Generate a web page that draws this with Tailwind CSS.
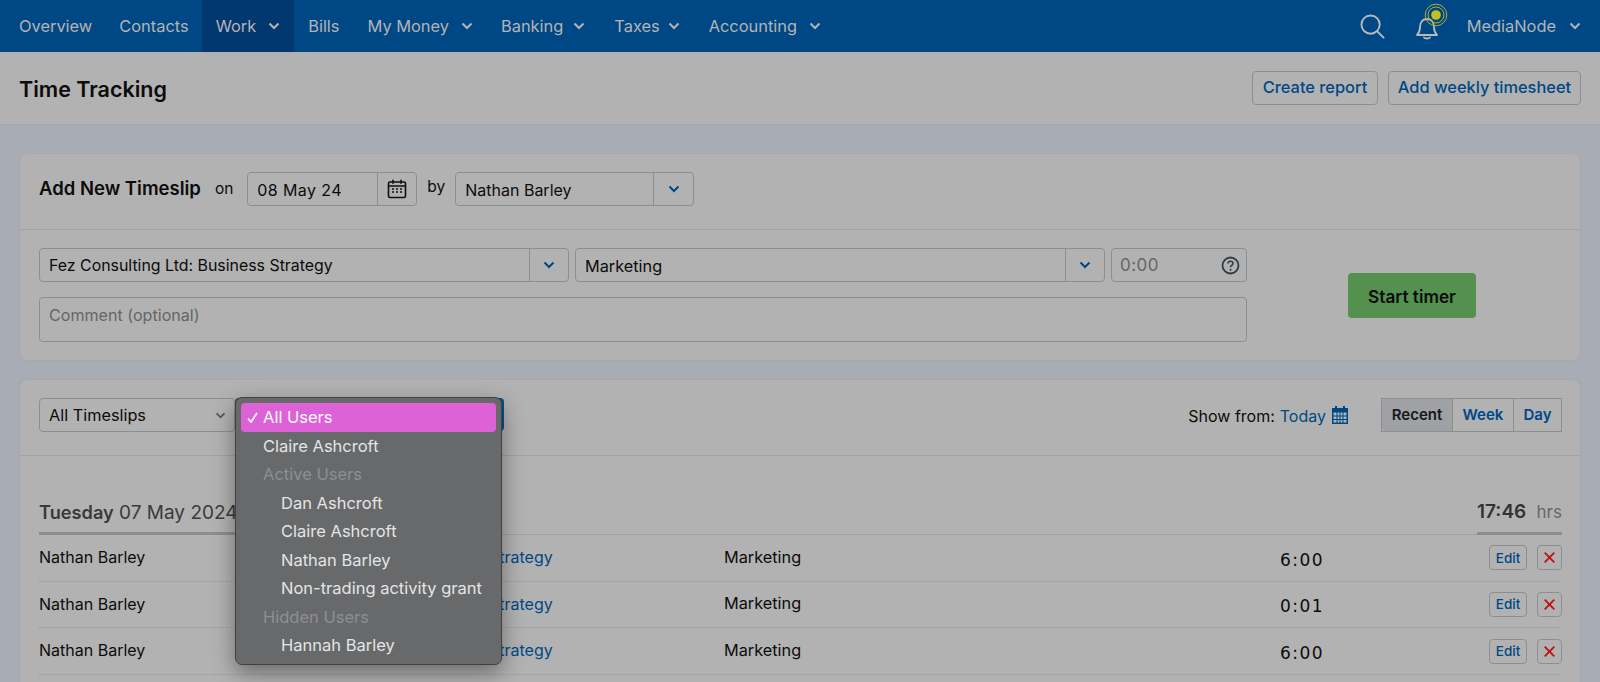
<!DOCTYPE html>
<html lang="en">
<head>
<meta charset="UTF-8">
<title>Time Tracking</title>
<script src="https://cdn.jsdelivr.net/npm/@tailwindcss/browser@4"></script>
</head>
<body class="h-[682px] overflow-hidden bg-[#a8acb5] font-['Inter','Liberation_Sans',sans-serif] text-[16px] text-[#0c0c0c]">

<!-- Top nav -->
<nav class="flex h-[52px] items-stretch bg-[#004885] pl-[5px] pr-[19px] text-[16.400px] text-[#b4b4b4]">
  <a class="flex items-center pl-[14px] pr-[13px]">Overview</a>
  <a class="flex items-center pl-[14px] pr-[13px]">Contacts</a>
  <a class="flex items-center gap-[12px] bg-[#00386f] px-[14px]">Work
    <svg class="h-[8px] w-[12px]" viewBox="0 0 12 8" fill="none" stroke="#b4b4b4" stroke-width="2"><path d="M1.500 1.500 6 6l4.500-4.500"/></svg>
  </a>
  <a class="flex items-center px-[14px]">Bills</a>
  <a class="flex items-center gap-[12px] px-[14px]">My Money
    <svg class="h-[8px] w-[12px]" viewBox="0 0 12 8" fill="none" stroke="#b4b4b4" stroke-width="2"><path d="M1.500 1.500 6 6l4.500-4.500"/></svg>
  </a>
  <a class="flex items-center gap-[10px] pl-[14px] pr-[15px]">Banking
    <svg class="h-[8px] w-[12px]" viewBox="0 0 12 8" fill="none" stroke="#b4b4b4" stroke-width="2"><path d="M1.500 1.500 6 6l4.500-4.500"/></svg>
  </a>
  <a class="flex items-center gap-[8px] pl-[14px] pr-[15px]">Taxes
    <svg class="h-[8px] w-[12px]" viewBox="0 0 12 8" fill="none" stroke="#b4b4b4" stroke-width="2"><path d="M1.500 1.500 6 6l4.500-4.500"/></svg>
  </a>
  <a class="flex items-center gap-[12px] px-[14px]">Accounting
    <svg class="h-[8px] w-[12px]" viewBox="0 0 12 8" fill="none" stroke="#b4b4b4" stroke-width="2"><path d="M1.500 1.500 6 6l4.500-4.500"/></svg>
  </a>
  <div class="ml-auto flex items-center">
    <svg class="mr-[29px] h-[25px] w-[25px]" viewBox="0 0 26 26" fill="none" stroke="#b9b9b9" stroke-width="2"><circle cx="11" cy="11" r="9.500"/><path d="m18 18 6.500 6.500" stroke-linecap="round"/></svg>
    <div class="relative mr-[27px] h-[26px] w-[26px]">
      <svg class="absolute left-0 top-[1px] h-[26px] w-[26px]" viewBox="0 0 26 26" fill="none" stroke="#b9b9b9" stroke-width="1.800"><path d="M3 21c2-2 3-4 3-8 0-5 3-8 7-8s7 3 7 8c0 4 1 6 3 8z" stroke-linejoin="round"/><path d="M10 23.500c1 1.300 5 1.300 6 0" stroke-linecap="round"/></svg>
      <svg class="absolute -right-[8px] -top-[10px] h-[24px] w-[24px]" viewBox="0 0 24 24" fill="none"><circle cx="12" cy="12" r="10.800" stroke="#b3ae2c" stroke-width="1"/><circle cx="12" cy="12" r="8" stroke="#b3ae2c" stroke-width="1"/><circle cx="12" cy="12" r="4.800" fill="#c5bf1f"/></svg>
    </div>
    <span>MediaNode</span>
    <svg class="ml-[13px] h-[8px] w-[12px]" viewBox="0 0 12 8" fill="none" stroke="#b4b4b4" stroke-width="2"><path d="M1.500 1.500 6 6l4.500-4.500"/></svg>
  </div>
</nav>

<!-- Page header -->
<header class="flex h-[73px] items-center border-b border-[#a5a7ab] bg-[#b2b2b2] pl-[19px] pr-[19px]">
  <h1 class="pt-[2px] text-[21.500px] font-semibold">Time Tracking</h1>
  <div class="ml-auto flex gap-[10px] pb-[1px] text-[16.400px] font-medium text-[#004885]">
    <button class="h-[34px] w-[126px] rounded-[4px] border border-[#8b8f92]">Create report</button>
    <button class="h-[34px] w-[193px] rounded-[4px] border border-[#8b8f92]">Add weekly timesheet</button>
  </div>
</header>

<main class="px-[19px] pt-[28px]">
  <!-- Add new timeslip -->
  <section class="h-[208px] rounded-[8px] border border-[#a5a8ad] bg-[#b2b2b2]">
    <div class="flex h-[76px] items-start gap-[14px] border-b border-[#a0a2a4] pl-[19px] pt-[18px]">
      <div class="flex h-[34px] items-center gap-[14px]">
        <h2 class="text-[18.500px] font-semibold">Add New Timeslip</h2>
        <span class="text-[15.500px]">on</span>
      </div>
      <div class="flex h-[34px] w-[170px] rounded-[4px] border border-[#8b8f92]">
        <span class="flex flex-1 items-center pl-[9px] pt-[1px] text-[16px] tracking-[0.4px]">08 May 24</span>
        <span class="flex w-[39px] items-center justify-center border-l border-[#8b8f92]">
          <svg class="h-[20px] w-[20px]" viewBox="0 0 20 20" fill="none" stroke="#101010" stroke-width="1.600"><rect x="1.500" y="3" width="17" height="15.500" rx="1.500"/><path d="M1.500 7h17M6 .8v4M14 .8v4"/><path d="M5 10h2M9 10h2M13 10h2M5 13h2M9 13h2M13 13h2" stroke-width="1.500"/></svg>
        </span>
      </div>
      <span class="-mx-[4px] flex h-[30px] items-center text-[15.500px]">by</span>
      <div class="flex h-[34px] w-[239px] rounded-[4px] border border-[#8b8f92]">
        <span class="flex flex-1 items-center pl-[9px] pt-[1px]">Nathan Barley</span>
        <span class="flex w-[40px] items-center justify-center border-l border-[#8b8f92]">
          <svg class="h-[8px] w-[12px]" viewBox="0 0 12 8" fill="none" stroke="#004885" stroke-width="2"><path d="M1.500 1.500 6 6l4.500-4.500"/></svg>
        </span>
      </div>
    </div>
    <div class="flex pl-[19px] pt-[18px]">
      <div class="flex w-[1208px] flex-col gap-[15px]">
        <div class="flex gap-[6px]">
          <div class="flex h-[34px] w-[530px] rounded-[4px] border border-[#8b8f92]">
            <span class="flex flex-1 items-center pl-[9px] pt-[2px] text-[15.900px]">Fez Consulting Ltd: Business Strategy</span>
            <span class="flex w-[39px] items-center justify-center border-l border-[#8b8f92]">
              <svg class="h-[8px] w-[12px]" viewBox="0 0 12 8" fill="none" stroke="#004885" stroke-width="2"><path d="M1.500 1.500 6 6l4.500-4.500"/></svg>
            </span>
          </div>
          <div class="flex h-[34px] w-[530px] rounded-[4px] border border-[#8b8f92]">
            <span class="flex flex-1 items-center pl-[9px] pt-[2px] text-[16.300px]">Marketing</span>
            <span class="flex w-[39px] items-center justify-center border-l border-[#8b8f92]">
              <svg class="h-[8px] w-[12px]" viewBox="0 0 12 8" fill="none" stroke="#004885" stroke-width="2"><path d="M1.500 1.500 6 6l4.500-4.500"/></svg>
            </span>
          </div>
          <div class="flex h-[34px] w-[136px] items-center justify-between rounded-[4px] border border-[#8b8f92] pl-[8px] pr-[6px] text-[#666]">
            <span class="pt-[1px] text-[17px] tracking-[0.5px]">0:00</span>
            <svg class="h-[19px] w-[19px]" viewBox="0 0 19 19" fill="none"><circle cx="9.500" cy="9.500" r="8" stroke="#333b42" stroke-width="1.800"/><path d="M7 7.500c0-3 5-3 5 0 0 2-2.500 1.800-2.500 3.700" stroke="#333b42" stroke-width="1.600"/><circle cx="9.500" cy="13.700" r="1" fill="#333b42"/></svg>
          </div>
        </div>
        <div class="h-[45px] rounded-[4px] border border-[#8b8f92] pl-[9px] pt-[5px] text-[16.100px] text-[#666]">Comment (optional)</div>
      </div>
      <button class="ml-[101px] mt-[25px] h-[45px] w-[128px] rounded-[4px] bg-[#54914f] pt-[2px] text-[17.200px] font-semibold">Start timer</button>
    </div>
  </section>

  <!-- Timeslips list -->
  <section class="mt-[18px] rounded-t-[8px] border border-[#a5a8ad] bg-[#b2b2b2] pb-[40px]">
    <div class="flex h-[76px] items-start border-b border-[#a0a2a4] pl-[19px] pr-[18px] pt-[18px]">
      <div class="flex h-[34px] w-[196px] items-center justify-between rounded-[4px] border border-[#8b8f92] pl-[9px] pr-[8px]">
        <span class="pt-[1px] text-[16.300px]">All Timeslips</span>
        <svg class="h-[7px] w-[11px]" viewBox="0 0 12 8" fill="none" stroke="#555" stroke-width="2"><path d="M1.500 1.500 6 6l4.500-4.500"/></svg>
      </div>
      <div class="relative h-[33px] w-[269px] rounded-[4px] bg-[#0a4f8e]">
        <!-- open native select menu -->
        <div class="absolute -top-[1px] left-0 z-10 h-[268px] w-[267px] rounded-[7px] border border-[#3f4143] bg-[#68696b] p-[5px] text-[16.500px] text-[#e4e4e4] shadow-[0_8px_22px_rgba(0,0,0,0.4)]">
          <div class="relative flex h-[29px] items-center rounded-[4px] bg-[#dd62d8] pl-[22px] text-white">
            <svg class="absolute left-[6px] top-[9px] h-[11px] w-[11px]" viewBox="0 0 11 11" fill="none" stroke="#fff" stroke-width="1.800"><path d="M1 6.500 4 10l6-9"/></svg>All Users
          </div>
          <div class="flex h-[28.500px] items-center pl-[22px]">Claire Ashcroft</div>
          <div class="flex h-[28.500px] items-center pl-[22px] text-[#8d8f91]">Active Users</div>
          <div class="flex h-[28.500px] items-center pl-[40px]">Dan Ashcroft</div>
          <div class="flex h-[28.500px] items-center pl-[40px]">Claire Ashcroft</div>
          <div class="flex h-[28.500px] items-center pl-[40px]">Nathan Barley</div>
          <div class="flex h-[28.500px] items-center pl-[40px]">Non-trading activity grant</div>
          <div class="flex h-[28.500px] items-center pl-[22px] text-[#8d8f91]">Hidden Users</div>
          <div class="flex h-[28.500px] items-center pl-[40px]">Hannah Barley</div>
        </div>
      </div>
      <div class="ml-auto flex h-[34px] items-center">
        <span class="pt-[2px]">Show from:</span>
        <a class="ml-[5px] pt-[2px] text-[#004885]">Today</a>
        <svg class="ml-[6px] h-[18px] w-[16px]" viewBox="0 0 16 18" fill="#004885"><path d="M3 0h2v2h6V0h2v2h3v16H0V2h3zM1.500 6.500v3h3v-3zm4 0v3h2v-3zm3 0v3h2v-3zm3 0v3h3v-3zm-10 4v2.500h3v-2.500zm4 0v2.500h2v-2.500zm3 0v2.500h2v-2.500zm3 0v2.500h3v-2.500zm-10 3.500v2.500h3V14zm4 0v2.500h2V14zm3 0v2.500h2V14zm3 0v2.500h3V14z" fill-rule="evenodd"/></svg>
        <div class="ml-[33px] flex h-[34px] w-[181px] border border-[#8b8f92] text-[15px] font-semibold text-[#004885]">
          <span class="flex w-[71px] items-center justify-center rounded-l-[3px] border-r border-[#8b8f92] bg-[#9fa1a5] text-[#16181a]">Recent</span>
          <span class="flex w-[61px] items-center justify-center border-r border-[#8b8f92]">Week</span>
          <span class="flex flex-1 items-center justify-center">Day</span>
        </div>
      </div>
    </div>
    <div class="pl-[19px] pr-[18px]">
      <div class="flex h-[79px] items-end justify-between border-b border-[#a0a2a4]">
        <div class="mb-[-1px] h-[36px] w-[230px] border-b-[3px] border-[#8d8e95] text-[19px] leading-[26px] text-[#3a3a3a]"><b class="text-[18.200px] font-semibold">Tuesday</b> 07 May 2024</div>
        <div class="mb-[-1px] flex h-[36px] w-[85px] justify-between border-b-[3px] border-[#8d8e95] text-[19px] leading-[26px]"><b class="font-semibold text-[#333]">17:46</b><span class="text-[17px] text-[#66686c]">hrs</span></div>
      </div>
      <div class="flex h-[46.700px] items-center border-b border-dotted border-[#999]">
        <span class="w-[228px] pb-[2px]">Nathan Barley</span>
        <a class="w-[457px] pb-[2px] text-[#004885]">Fez Consulting Ltd: Business Strategy</a>
        <span class="w-[556px] pb-[2px] text-[16.300px]">Marketing</span>
        <span class="mt-[5px] font-['DejaVu_Sans'] text-[17px] tracking-[1.500px]">6:00</span>
        <button class="ml-auto h-[25px] w-[38px] rounded-[4px] border border-[#8b8f92] text-[13.500px] font-medium text-[#004885]">Edit</button>
        <button class="ml-[10px] flex h-[25px] w-[25px] items-center justify-center rounded-[4px] border border-[#8b8f92]"><svg class="h-[11px] w-[11px]" viewBox="0 0 11 11" stroke="#c0100f" stroke-width="1.800"><path d="m.7.7 9.600 9.600M10.300.7.700 10.300"/></svg></button>
      </div>
      <div class="flex h-[46.700px] items-center border-b border-dotted border-[#999]">
        <span class="w-[228px] pb-[2px]">Nathan Barley</span>
        <a class="w-[457px] pb-[2px] text-[#004885]">Fez Consulting Ltd: Business Strategy</a>
        <span class="w-[556px] pb-[2px] text-[16.300px]">Marketing</span>
        <span class="mt-[5px] font-['DejaVu_Sans'] text-[17px] tracking-[1.500px]">0:01</span>
        <button class="ml-auto h-[25px] w-[38px] rounded-[4px] border border-[#8b8f92] text-[13.500px] font-medium text-[#004885]">Edit</button>
        <button class="ml-[10px] flex h-[25px] w-[25px] items-center justify-center rounded-[4px] border border-[#8b8f92]"><svg class="h-[11px] w-[11px]" viewBox="0 0 11 11" stroke="#c0100f" stroke-width="1.800"><path d="m.7.7 9.600 9.600M10.300.7.700 10.300"/></svg></button>
      </div>
      <div class="flex h-[46.700px] items-center border-b border-dotted border-[#999]">
        <span class="w-[228px] pb-[2px]">Nathan Barley</span>
        <a class="w-[457px] pb-[2px] text-[#004885]">Fez Consulting Ltd: Business Strategy</a>
        <span class="w-[556px] pb-[2px] text-[16.300px]">Marketing</span>
        <span class="mt-[5px] font-['DejaVu_Sans'] text-[17px] tracking-[1.500px]">6:00</span>
        <button class="ml-auto h-[25px] w-[38px] rounded-[4px] border border-[#8b8f92] text-[13.500px] font-medium text-[#004885]">Edit</button>
        <button class="ml-[10px] flex h-[25px] w-[25px] items-center justify-center rounded-[4px] border border-[#8b8f92]"><svg class="h-[11px] w-[11px]" viewBox="0 0 11 11" stroke="#c0100f" stroke-width="1.800"><path d="m.7.7 9.600 9.600M10.300.7.700 10.300"/></svg></button>
      </div>
    </div>
  </section>
</main>
</body>
</html>
